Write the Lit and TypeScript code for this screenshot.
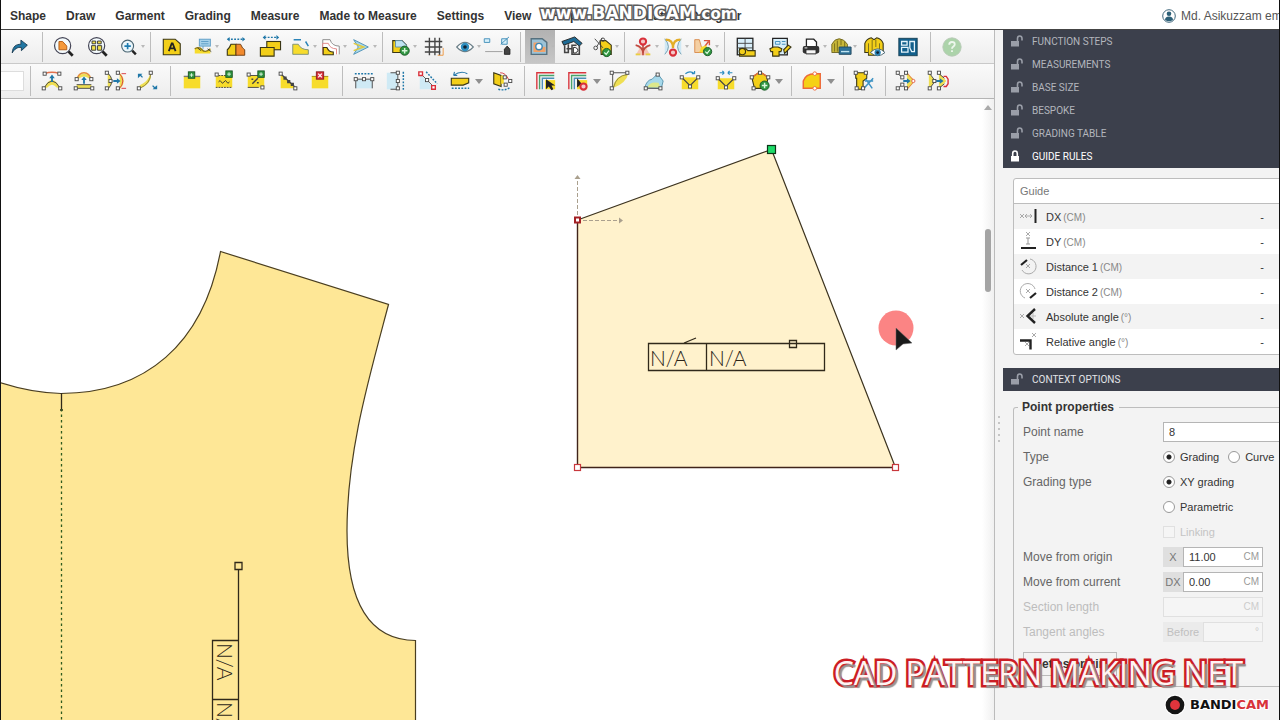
import { LitElement, html, svg, css, TemplateResult } from "lit";
import { customElement } from "lit/decorators.js";
import { classMap } from "lit/directives/class-map.js";

const node = (x: number, y: number) => svg`<rect class="n" x=${x - 1.7} y=${y - 1.7} width="3.4" height="3.4"/>`;
const nodes = (...p: number[][]) => p.map(([x, y]) => node(x, y));
const plus = (x: number, y: number) => svg`<circle cx=${x} cy=${y} r="5" fill="#2f9540" stroke="#1c5a28"/><path d="M${x - 3} ${y}h6M${x} ${y - 3}v6" stroke="#d9f5dc" stroke-width="1.6"/>`;
const check = (x: number, y: number) => svg`<circle cx=${x} cy=${y} r="4.5" fill="#2f9540" stroke="#1c5a28"/><path d="M${x - 2.5} ${y}l2 2l3-4" fill="none" stroke="#e6ffe8" stroke-width="1.3"/>`;
const stop = (x: number, y: number) => svg`<circle cx=${x} cy=${y} r="3.4" fill="#f4c9c9" stroke="#d9303a" stroke-width="2.2"/>`;

const icons: Record<string, TemplateResult> = {
  Redo: svg`<path d="M3.500 18.500C4 11 8 9 13 9V4.500L20 10L13.500 16V12.500C9 12 6 14 3.500 18.500Z" fill="#2177a3" stroke="#1d3c52"/>`,
  "Zoom piece": svg`<circle cx="10.500" cy="10.500" r="8.800" fill="#f4fbfd" stroke="#445" stroke-width="1.300"/><path d="M17 17l4.500 4.500" stroke="#222" stroke-width="3"/><path d="M6.500 6h4l4.500 5v4H6.500Z" fill="#f59a3c" stroke="#b35a10"/>`,
  "Zoom all": svg`<circle cx="10.500" cy="10.500" r="8.800" fill="#f4fbfd" stroke="#445" stroke-width="1.300"/><path d="M17 17l4.500 4.500" stroke="#222" stroke-width="3"/><path d="M5.500 5.500h4v3h-4zM11.500 5.500h4v3h-4zM5 10.500h4.500v5h-4.500zM11.500 10.500h4.500v5h-4.500z" fill="#f0e04a" stroke="#333"/>`,
  "Zoom in": svg`<circle cx="10.500" cy="11" r="6.500" fill="#eaf6fb" stroke="#4a6572" stroke-width="1.200"/><path d="M15.500 16l4 4" stroke="#222" stroke-width="2.600"/><path d="M10.500 7.500v7M7 11h7" stroke="#1d7bb0" stroke-width="1.800"/>`,
  Annotation: svg`<path class="y" d="M2.500 3.500h13l5.500 5v12h-18.500Z"/><path d="M8.500 16.500l3.200-8.500h1l3.200 8.500M9.700 13.500h5" fill="none" stroke="#222" stroke-width="1.900"/>`,
  "Piece note": svg`<path class="ys" d="M3 14q5-3 8 1t9-1v5H3Z"/><path d="M3 14q5-3 8 1t9-1" fill="none" stroke="#8f7a14" stroke-width="1.500"/><rect x="8" y="3.500" width="12" height="7.500" fill="#a8d2ea" stroke="#5b9cc5"/><path d="M10 6h8M10 8.500h8M12 11v3" stroke="#5b9cc5"/><path d="M6 13l4 3M17 14l4 3" stroke="#333"/>`,
  "Mirror piece": svg`<path d="M3 3.500h18" class="db"/><path d="M5 1l-3 2.500 3 2.500zM19 1l3 2.500-3 2.500z" class="b"/><path class="y" d="M2.500 21v-6q2-1 4-6h5.500v12Z"/><path d="M12 9h5q2 5 4.500 6v6H12Z" fill="#f28a2e" stroke="#6b3a10"/>`,
  "Move piece": svg`<path d="M6 1.500h14" class="db"/><path d="M7-1l-3 2.500 3 2.500zM19-1l3 2.500-3 2.500z" class="b"/><rect class="y" x="8.500" y="6" width="15" height="9"/><path class="y" d="M1.500 12.500h15v9.500h-15z"/>`,
  "Extend seam": svg`<path d="M4 4h8M17 6l3 5" class="bl"/><path class="ys" d="M3 9h6q3 6 11 6v5H3Z"/><path d="M3 9h6q3 6 11 6v5H3Z" class="o"/>`,
  "Offset piece": svg`<path d="M3 20V4h8q2 7 10 7v9" fill="#fff" stroke="#888"/><path d="M3 20V8h6q2 6 9 6v6" fill="#fff" stroke="#e08080"/><path class="y" d="M3.500 20.500v-8h4q2 5 7 5v3Z"/>`,
  Dart: svg`<path d="M4 4L20 12L4 20L9 12Z" fill="#a8d8ea" stroke="#4a8fb5"/><path d="M4 8l11 4L4 16" fill="none" stroke="#e2c938" stroke-width="1.500"/>`,
  "New piece": svg`<path class="y" d="M3 5h10l5 5v8H3Z"/><path d="M6 5h7l5 5v2H6z" fill="#bfe3f0" stroke="#5d8ea5"/>${plus(16, 16)}`,
  Grid: svg`<path class="k" d="M7 2v19M13 2v19M18 2v19M2 6h19M2 12h19M2 17.500h17" stroke-width="1.500"/><path d="M16 21h6v-8" fill="none" stroke="#ee9640"/>`,
  View: svg`<path d="M3 12q9-10 18 0q-9 10-18 0Z" fill="#fff" stroke="#6b7f88" stroke-width="1.300"/><circle cx="12" cy="12" r="4.600" fill="#2e8fc0"/><circle cx="12" cy="12" r="2" fill="#123"/>`,
  Slider: svg`<path d="M-3 3h6v4h-6zM16 3h6v6h-6z" fill="#d7f0fb" stroke="#3f8db8"/><path d="M-2 17h19" stroke="#999"/><path d="M19 20v-5.500l3-3.500 3 3.500v5.500z" fill="#444" stroke="#222"/><path d="M15 9l9-8" stroke="#3f8db8"/>`,
  "Show piece": svg`<path d="M3.500 3h12l5 4v13h-17Z" fill="#9cc2d6" stroke="#55707e" stroke-width="1.500"/><path d="M6 17.500V7h7q1 5 6 5v5.500Z" fill="#f2a268"/><circle cx="12" cy="11.500" r="3.500" fill="#fff" stroke="#3c88b4" stroke-width="1.500"/>`,
  Carriage: svg`<path d="M1 6L15 1l8 7-3 3-6-5-11 4Z" fill="#1e6b95" stroke="#222"/><path class="k" d="M4 10v8h4v-9M6 14h6M20 11v9h-8v-10h5" stroke-width="1.700"/><path d="M13.500 12.500v6h2q3-1 3-3t-3-3z" fill="#fff" stroke="#222"/>`,
  Cut: svg`<path class="y" d="M9 5h6l6 5v10H10Z"/><path class="k" d="M3 3l9 10M11 2l-6 10"/><circle cx="4" cy="13" r="2" class="k"/><circle cx="12" cy="4" r="1.800" class="k"/>${check(16, 18)}`,
  Fitting: svg`<path d="M4 21l4-7-4-4 8 4 8-4-4 4 4 7z" fill="#f4c6b8"/><path d="M12 9v12M4 10q8 2 8 9q0-7 8-9" fill="none" stroke="#c04a40" stroke-width="1.800"/><path d="M4 20h5M15 20h5" stroke="#e8d040" stroke-width="2"/>${stop(12, 6)}`,
  Unpick: svg`<path d="M3 3q8 9 0 17M21 3q-8 9 0 17" fill="#cfe8f4" stroke="#6b9aae"/><path d="M4 4q8 0 8 9q0-9 8-9" fill="none" stroke="#e3ae28" stroke-width="2.500"/>${stop(12, 18)}`,
  "Grade check": svg`<path d="M3 4h5l4 14H3z" fill="#f4cfa3" stroke="#d98a4a"/><path d="M9 18L18 6M13 5h6v5" fill="none" stroke="#d95540" stroke-width="1.500"/><path class="ys" d="M10 12l6-2v8H8z"/>${check(17, 17)}`,
  "Size table": svg`<rect x="2.500" y="2.500" width="17" height="18" fill="#d8effa" stroke="#222" stroke-width="1.400"/><path class="k" d="M2.500 8h17M2.500 13h17M11 2.500v18"/><path class="y" d="M5 14h7l2 2h8v6H5z"/><circle class="y" cx="8" cy="17" r="3.500"/>`,
  "Garment sheet": svg`<path d="M4 2.500h16v18h-16z" fill="#d8effa" stroke="#222" stroke-width="1.300"/><path d="M7 6h5v3H7zM14 6h4M14 9h4" stroke="#3d8dbd" fill="none"/><path class="y" d="M1 14l4-2h5l4 2-1 3h-2v5H4v-5H2zM16 15l5-5 3 2-7 7z"/>`,
  Print: svg`<path d="M7 11V3.500h8l3 3v5" fill="#fff" stroke="#222" stroke-width="1.400"/><rect x="3" y="11" width="18" height="8" rx="2" fill="#333"/><path d="M6.500 15h11v4.500h-11z" fill="#f6f6f6" stroke="#222"/><path d="M5 13h3" stroke="#fff"/>`,
  "Garment print": svg`<path d="M2 17V9q3-6 8-6t9 6v9H2z" fill="#c9b83a" stroke="#6d6420"/><path d="M12 4v6M8 5v12M16 6v6M5 8v9" stroke="#776b18"/><path d="M10 12h13v8H10z" fill="#2f7299" stroke="#22495e"/><path d="M12 17h9" stroke="#bfe3f0" stroke-width="1.500"/>`,
  "Garment view": svg`<path class="y" d="M2 8q2-5 7-6l3 2 3-2q5 1 7 6v10h-4v3H6v-3H2Z"/><path d="M6 8v12M10 4v14M14 4v8M18 8v7" stroke="#776b18"/><path d="M8 18q8-8 16 0q-8 7-16 0Z" fill="#fff" stroke="#42606e"/><circle cx="16" cy="18" r="3.400" fill="#2a84b6"/><circle cx="16" cy="18" r="1.500" fill="#123"/>`,
  Marker: svg`<rect x="2" y="2.500" width="20" height="19" fill="#13608c" stroke="#174055"/><path d="M5 6h6v4H5zM5 12.500h7v5H5zM14 6h5v11h-3l-2-4z" fill="none" stroke="#e7f5fc" stroke-width="1.400"/>`,
  Help: svg`<circle cx="12" cy="12" r="10" fill="#acd3aa" stroke="#b8c9b7"/><path d="M9 9.500q0-3 3-3t3 2.500q0 1.500-1.500 2.500t-1.500 2.500M12 15.500v2" fill="none" stroke="#edf7ed" stroke-width="2"/>`,

  "Curve up": svg`<path class="yl" d="M3 20q9-18 18 0l-4-1q-5-6-10 0z"/><path d="M4 4q8-3 16 0" fill="none" stroke="#e2704c" stroke-width="1.600"/><path class="k" d="M3 20q9-16 18 0"/><path class="bf" d="M12 5l-3 4h2v4h2v-4h2z"/>${nodes([4, 4], [20, 4], [3, 20], [21, 20])}`,
  "Curve down": svg`<path class="yl" d="M4 16h16v4H4zM4 11q2-7 8-7t8 7l-3-2q-5-4-10 0z"/><path d="M4 11q2-8 8-8t8 8" fill="none" stroke="#e58c3a" stroke-width="1.600"/><path class="k" d="M4 20h16M4 16h16"/><path class="bf" d="M12 7l-3 4h2v4h2v-4h2z"/>${nodes([4, 10], [20, 10], [3, 20], [21, 20])}`,
  "Curve right": svg`<path class="yl" d="M3 3q9 9 0 18zM16 3q9 9 0 18z"/><path class="k" d="M3 3q9 9 0 18"/><path d="M15 3q9 9 0 18M18 4h5M18 20h5" fill="none" stroke="#d9363e"/><path class="bf" d="M9 11h4v-2l4 3-4 3v-2H9z"/>${nodes([2, 3], [2, 20], [14, 3], [14, 20], [6, 12])}`,
  "Curve stretch": svg`<path class="yl" d="M15 3q2 12-12 17q-2-3 3-5q6-3 9-12"/><path d="M15 3q0 12-12 17" fill="none" stroke="#8a8030"/><path class="bf" d="M1 4h5l-1.500 1.500 2 2-1 1-2-2L1 9zM22 21h-5l1.500-1.500-2-2 1-1 2 2 2.500-2z"/>${nodes([15, 3], [2, 20])}`,
  "Add point": svg`<path class="ys" d="M3 7h18v13H3z"/><path d="M3 7h18" stroke="#777" stroke-width="1.500"/><rect x="8" y="2" width="7" height="7" fill="#2f9540" stroke="#175522"/><path d="M9.500 5.500h4M11.500 3.500v4" stroke="#dff5e2"/>`,
  "Add named": svg`<path class="ys" d="M3 6h18v13H3z"/><path class="k" d="M3 6h18M3 19h18" stroke-dasharray="2 1"/><path d="M6 13q2-3 3 0t3 0t3 0t3 0" fill="none" stroke="#333"/><rect x="14" y="1" width="7" height="7" fill="#2f9540" stroke="#175522"/><path d="M15.500 4.500h4M17.500 2.500v4" stroke="#dff5e2"/>${nodes([4, 5])}`,
  "Add ratio": svg`<path class="ys" d="M3 6h18v13H3z"/><path class="k" d="M3 6h18M3 19h12"/><path class="k" d="M8 15l6-6M7 10h2M13 14h2" stroke-width="1.600"/><rect x="14" y="1" width="7" height="7" fill="#2f9540" stroke="#175522"/><path d="M15.500 4.500h4M17.500 2.500v4" stroke="#dff5e2"/>${nodes([4, 5], [19, 19])}`,
  "Divide line": svg`<path class="ys" d="M4 4l17 16H4Z"/><path class="k" d="M4 4l17 16" stroke-width="1.400"/><path d="M7 7h3.500v3.500H7zM11 11h3.500v3.500H11zM15 14h3.500v3.500H15z" fill="#444"/>${nodes([4, 4], [20, 20])}`,
  "Delete point": svg`<path class="ys" d="M3 7h18v13H3z"/><path d="M3 7h18" stroke="#a08a10"/><rect x="8" y="2" width="8" height="8" fill="#d9303a" stroke="#8a1c22"/><path d="M10 4l4 4M14 4l-4 4" stroke="#fff" stroke-width="1.400"/>`,
  "Align across": svg`<path class="ls" d="M3 10h18v10H3z"/><path class="db" d="M2 4h20"/><path class="k" d="M3 10h18M3 12v8M21 12v8"/>${nodes([3, 10], [12, 10], [21, 10])}`,
  "Align down": svg`<path class="ls" d="M2 3h12v18H2z"/><path class="db" d="M20 2v20"/><path class="k" d="M6 3h8v18H6"/>${nodes([14, 3], [14, 12], [14, 20])}`,
  "Align slope": svg`<path class="ls" d="M3 4l17 17H3Z"/><path class="db" d="M10 2l12 13"/><path d="M4 4l15 15" stroke="#555"/><path d="M2 2h4v4H2zM16 17h4v4h-4z" fill="#fff" stroke="#d9303a" stroke-width="1.500"/>${nodes([11, 11])}`,
  "Rotate piece": svg`<path class="db" d="M3 20h19"/><path d="M5 6q8-6 15-2M5 6l1-4M5 6l4 0" fill="none" stroke="#2b7bab" stroke-width="1.200"/><path class="y" d="M2.500 9h19v5l-6 2.500h-13z"/>`,
  "Fold piece": svg`<path class="y" d="M3 3l8 3v12l-8-3z"/><path class="ys" d="M11 6h3v9h-3z"/><path d="M10 3q6 0 9 7" fill="none" stroke="#d9363e"/><path class="db" d="M8 21q7 2 13-2"/>${nodes([15, 8], [21, 12], [16, 16])}`,
  "Pick seam": svg`<path d="M2 21V3h19" fill="none" stroke="#d9363e" stroke-width="1.500"/><path d="M5 21V6h16" fill="none" stroke="#4aa36a" stroke-width="1.500"/><path d="M8 21V9h13" fill="none" stroke="#4c8fb8" stroke-width="1.500"/><path class="ys" d="M11 11h11v10H11z"/><path d="M12 10v11l3-3 3 4 2-1-2-4h4z" fill="#222"/>`,
  "Delete seam": svg`<path d="M2 21V3h19" fill="none" stroke="#d9363e" stroke-width="1.500"/><path d="M5 21V6h16" fill="none" stroke="#4aa36a" stroke-width="1.500"/><path d="M8 21V9h13" fill="none" stroke="#4c8fb8" stroke-width="1.500"/><path class="ys" d="M11 11h11v10H11z"/><path d="M11 9v10l5-4z" fill="#222"/>${stop(18, 18)}`,
  "Curve segment": svg`<path class="yl" d="M4 20Q6 6 21 4Q19 14 4 20Z"/><path class="k" d="M4 3h17M4 3v18"/><path d="M5 19Q8 6 20 5" fill="none" stroke="#8c8740"/>${nodes([3, 3], [20, 3], [3, 20])}`,
  "Polygon piece": svg`<path d="M2 19q2-8 8-9l6-6 6 8-2 8Z" fill="#a6d8ea" stroke="#5593ad"/><path d="M5 19q2-7 12-5l2 5z" fill="#dce88a"/><path class="k" d="M3 20h17"/>${nodes([3, 20], [19, 20], [16, 5])}`,
  "Rotate notch": svg`<path class="ys" d="M3 8h18v13H3z"/><path class="k" d="M3 8l9 9 9-9" stroke-width="1.300"/><path d="M7 4q5-4 10 0M17 4l-3 0M17 4l0-3" fill="none" stroke="#2b8cc0" stroke-width="1.300"/>${nodes([3, 8], [21, 8], [12, 18])}`,
  "Slide notch": svg`<path class="ys" d="M3 9h18v12H3z"/><path class="k" d="M3 9l9 9 9-9" stroke-width="1.300"/><path d="M5 3h5M14 3h5M10 3l-2-2M10 3l-2 2M14 3l2-2M14 3l2 2" fill="none" stroke="#2b8cc0" stroke-width="1.300"/>${nodes([3, 9], [21, 9], [12, 19])}`,
  "Add pocket": svg`<path class="y" d="M3 8l9-6 9 6-3 12H6Z"/><path d="M3 8l9-6 9 6" fill="none" stroke="#e2703a" stroke-width="1.500"/>${nodes([3, 8], [12, 3], [21, 8], [5, 20])}${plus(17, 17)}`,
  "Facing piece": svg`<path d="M2.500 20V12Q5 4 15 4h6v16Z" fill="#f5d116" stroke="#ed6a3a" stroke-width="1.600"/><circle cx="15" cy="4" r="2" fill="#fff" stroke="#ed6a3a"/><circle cx="15" cy="20" r="2" fill="#fff" stroke="#ed6a3a"/>`,
  "Split piece": svg`<path class="y" d="M3 3h12v6l-4 3v9H4V9H3Z"/><path d="M13 12h9M12 20l10-11M14 10l7 10" fill="none" stroke="#3c92c4" stroke-width="1.600"/>${nodes([3, 3], [14, 3], [4, 20], [11, 20])}`,
  "Merge point": svg`<path class="yl" d="M12 3l9 9-9 9q3-9 0-18"/><path class="k" d="M3 4l6 5M3 20l6-5"/><path d="M13 3q4 5 8 9q-4 5-8 9" fill="none" stroke="#e58c3a" stroke-width="1.300"/><path class="bf" d="M9 11h4v-2l4 3-4 3v-2H9z"/>${nodes([3, 3], [8, 8], [3, 20], [8, 16], [12, 3], [12, 20])}<circle cx="20" cy="12" r="1.800" fill="#fff" stroke="#e2604a"/>`,
  "Merge curve": svg`<path class="yl" d="M2 3l7 9-7 9zM13 3l8 9-8 9z"/><path class="k" d="M3 4l6 8-6 8M13 4l6 5M13 20l6-5"/><path class="bf" d="M10 11h4v-2l4 3-4 3v-2h-4z"/><path d="M18 7h3l2 3v5l-2 3h-3" fill="none" stroke="#d9303a" stroke-width="1.500"/>${nodes([3, 3], [3, 20], [8, 12], [13, 3], [13, 20])}`,
};

type Tool = { name?: string; kind?: "drop" | "wide" | "sep" | "sepwide" };
const t = (names: string): Tool[] =>
  names.split("|").map((s) => {
    if (s === "-") return { kind: "sep" };
    if (s === "=") return { kind: "sepwide" };
    if (s.endsWith(">")) return { name: s.slice(0, -1), kind: "drop" };
    if (s.endsWith("~")) return { name: s.slice(0, -1), kind: "wide" };
    return { name: s };
  });

const rowOne = t("Redo|-|Zoom piece|Zoom all|Zoom in>|-|Annotation|Piece note>|Mirror piece|Move piece|Extend seam>|Offset piece>|Dart>|-|New piece>|Grid|View>|Slider|-|Show piece>|Carriage|Cut>|-|Fitting>|Unpick>|Grade check>|-|Size table|Garment sheet|Print>|Garment print>|Garment view|Marker|-|Help");
const rowTwo = t("=|Curve up|Curve down|Curve right|Curve stretch|=|Add point|Add named|Add ratio|Divide line|Delete point|=|Align across|Align down|Align slope|Rotate piece>|Fold piece|=|Pick seam|Delete seam>|Curve segment|Polygon piece~|Rotate notch~|Slide notch~|Add pocket>|-|Facing piece>|-|Split piece|-|Merge point|Merge curve");

@customElement("pattern-toolbar")
export class PatternToolbar extends LitElement {
  static styles = css`
    :host { display: block; }
    .row { display: flex; align-items: center; height: 33px; overflow: hidden; background: linear-gradient(#fafafa, #ededed); border-bottom: 1px solid #c9c9c9; }
    .first { padding-left: 2px; }
    .second { height: 34px; border-color: #b4b4b4; }
    button { display: flex; align-items: center; justify-content: center; flex: none; height: 33px; padding: 0; border: 0; background: none; width: 34px; }
    .first .drop { width: 30px; justify-content: flex-end; gap: 1px; }
    .second button { width: 32px; }
    .second .drop { width: 42px; justify-content: flex-start; padding-left: 5px; gap: 4px; }
    .second .wide { width: 36px; }
    .first .on { background: linear-gradient(#b2b2b2, #c6c6c6); }
    .sep { flex: none; width: 10px; height: 30px; display: flex; justify-content: center; }
    .sepwide { width: 12px; }
    .sep::before { content: ""; width: 1px; background: #bdbdbd; }
    .arrow { border: 2px solid transparent; border-top: 3px solid #b9b9b9; border-bottom: 0; flex: none; }
    .second .arrow { border: 4px solid transparent; border-top: 5px solid #8f8f8f; border-bottom: 0; }
    select { appearance: none; width: 23px; height: 20px; border: 1px solid #ddd; border-left: 0; background: #fff; padding: 0; flex: none; }
    svg { width: 22px; height: 22px; overflow: visible; flex: none; }
    .y { fill: #f3cf19; stroke: #3a3616; stroke-width: 1.2; }
    .ys { fill: #f7dc2c; }
    .yl { fill: #efdf52; }
    .ls { fill: #cfeaf5; }
    .o { fill: none; stroke: #7b8f74; }
    .k { fill: none; stroke: #444; }
    .n { fill: #fff; stroke: #4a4a4a; }
    .b, .bf { fill: #1f77a8; }
    .bl { fill: none; stroke: #2b84b8; stroke-width: 1.6; }
    .db { fill: none; stroke: #1f77a8; stroke-width: 1.6; stroke-dasharray: 2 1.5; }
  `;
  private tool(i: Tool) {
    if (!i.name) return html`<span class=${classMap({ sep: true, sepwide: i.kind === "sepwide" })}></span>`;
    const drop = i.kind === "drop";
    return html`<button aria-label=${i.name} class=${classMap({ drop, wide: i.kind === "wide", on: i.name === "Show piece" })}>
      <svg viewBox="0 0 24 24">${icons[i.name]}</svg>${drop ? html`<span class="arrow"></span>` : ""}</button>`;
  }
  render() {
    return html`<div class="row first">${rowOne.map((i) => this.tool(i))}</div>
      <div class="row second"><select aria-label="Line style"><option></option></select>${rowTwo.map((i) => this.tool(i))}</div>`;
  }
}

@customElement("pattern-canvas")
export class PatternCanvas extends LitElement {
  static styles = css`
    :host { display: flex; background: #fff; min-height: 0; }
    .draw { flex: 1; width: 0; height: 100%; display: block; }
    .bar { width: 12px; background: linear-gradient(90deg, #fff, #f0f0f0); display: flex; flex-direction: column; align-items: center; padding-top: 6px; }
    .up { border: 4px solid transparent; border-bottom: 5px solid #aaa; border-top: 0; }
    .thumb { width: 6px; height: 63px; border-radius: 3px; background: #a4a4a4; margin-top: 119px; }
    .line { fill: none; stroke: #3c331f; stroke-width: 1.2; }
    .mark { fill: none; stroke: #30291a; stroke-width: 1.3; }
    .label { font: 300 21px Lato, sans-serif; fill: #2a2418; }
    .axis { fill: none; stroke: #aaa08e; stroke-dasharray: 4 2; }
    .corner { fill: #fff; stroke: #c8383c; stroke-width: 1.2; }
  `;
  render() {
    return html`<svg class="draw"><g transform="translate(-1 -99)">
        <path d="M-5 381Q30 393 61 393.500C145 393 203 345 220.500 251.500L388.500 304.500C369 378 347 452 347 531C347 600 367 640 415.500 640.500V730H-5Z" fill="#fee796" stroke="#4a3e20" stroke-width="1.200"/>
        <path class="mark" d="M61.500 393v17M60 410h3"/>
        <path d="M61.500 409V720" stroke="#2e5b1e" stroke-dasharray="2.500 3" stroke-width="1.300"/>
        <path class="mark" d="M238.500 570V720M212.500 720V640.500H238.500M212.500 699.500h26M235 562.500h7v7h-7z"/>
        <text class="label" transform="translate(217 643) rotate(90)">N/A</text>
        <text class="label" transform="translate(217 702) rotate(90)">N/A</text>
        <path d="M577.500 220L771.500 149.500L895.500 467.500H577.500Z" fill="#fff2cc"/>
        <path class="line" d="M577.500 220L771.500 149.500L895.500 467.500"/>
        <path d="M577.500 220V467.500H895.500" fill="none" stroke="#40241a" stroke-width="1.400"/>
        <path class="axis" d="M577.500 215V180M583 220.500H618"/>
        <path d="M574.500 179l3-4 3 4zM619 217.500l4 3-4 3z" fill="#aaa08e"/>
        <rect x="575" y="217.500" width="5" height="5" fill="#fff" stroke="#a32024" stroke-width="2"/>
        <rect class="corner" x="574.500" y="464.500" width="6" height="6"/><rect class="corner" x="892.500" y="464.500" width="6" height="6"/>
        <rect x="767.500" y="145.500" width="8" height="8" fill="#1edb69" stroke="#0d3518" stroke-width="1.200"/>
        <path class="mark" d="M648.500 343.500h176v27h-176zM706.500 343.500v27M684 343l12-5M789.500 340.500h7v7h-7z"/>
        <text class="label" x="650" y="366">N/A</text><text class="label" x="709" y="366">N/A</text>
        <circle cx="896" cy="328" r="17.500" fill="#fb8484"/>
        <path d="M896 328l16 15-9 1-7 6Z" fill="#1a1a1a" stroke="#666" stroke-width=".5"/>
      </g></svg>
      <div class="bar"><span class="up"></span><span class="thumb"></span></div>`;
  }
}

const lock = (open: boolean) => svg`<path d="M1 6h8v5.500h-8z" fill="currentColor"/><path d=${open ? "M7.500 6V3.500q0-2.500 2.200-2.500t2.300 2.500v2" : "M2.700 6V3.500q0-2.500 2.300-2.500t2.300 2.500V6"} fill="none" stroke="currentColor" stroke-width="1.600"/>`;
const cross = (x: number, y: number) => svg`<path d="M${x - 2} ${y - 2}l4 4M${x + 2} ${y - 2}l-4 4" stroke="#aaa"/>`;
const guides = [
  { name: "DX", unit: "(CM)", art: svg`${cross(2, 8)}<path d="M5 8h7M7 6l-2 2 2 2M10 6l2 2-2 2" fill="none" stroke="#999" stroke-width=".8"/><path d="M15.500 1v14" stroke="#222" stroke-width="2"/>` },
  { name: "DY", unit: "(CM)", art: svg`${cross(8, 1)}<path d="M8 5v6M6 5h4M6 11h4" stroke="#999"/><path d="M1 15h15" stroke="#222" stroke-width="2"/>` },
  { name: "Distance 1", unit: "(CM)", art: svg`<path d="M10 1a7.500 7.500 0 1 1-8 11" fill="none" stroke="#aaa"/>${cross(8, 8)}<path d="M1 7l6-5" stroke="#222" stroke-width="2.200"/>` },
  { name: "Distance 2", unit: "(CM)", art: svg`<path d="M5 15a7.500 7.500 0 1 1 10-9" fill="none" stroke="#aaa"/>${cross(8, 8)}<path d="M10 15l6-5" stroke="#222" stroke-width="2.200"/>` },
  { name: "Absolute angle", unit: "(°)", art: svg`${cross(2, 8)}<path d="M8 8h8M13 5v6" stroke="#bbb"/><path d="M15 1L7.500 8l7.500 7" fill="none" stroke="#222" stroke-width="2.400"/>` },
  { name: "Relative angle", unit: "(°)", art: svg`${cross(14, 2)}${cross(7, 11)}<path d="M0 7.500h10.500v9" fill="none" stroke="#222" stroke-width="2.400"/>` },
];

@customElement("side-panel")
export class SidePanel extends LitElement {
  static styles = css`
    :host { display: flex; flex-direction: column; min-width: 0; overflow: hidden; background: #f3f3f3; color: #333; font: 12px "Liberation Sans", Arial, sans-serif; }
    .body { flex: 1; display: flex; flex-direction: column; min-height: 0; margin-bottom: 33px; border-bottom: 1px solid #bbb; }
    .head { display: flex; align-items: center; gap: 9px; width: 100%; height: 23px; flex: none; padding: 0 0 0 7px; border: 0; background: #3c404c; color: #b3b6bd; font: 10px Roboto, sans-serif; text-align: left; }
    .head svg { width: 13px; height: 13px; color: #9a9ea8; }
    .lit, .lit svg { color: #fff; }
    .lite { color: #e2e4e8; }
    .card { margin: 10px -4px 13px 10px; border: 1px solid #bdbdbd; border-radius: 3px; background: #fff; }
    table { width: 100%; border-collapse: collapse; }
    th { height: 24px; padding: 0 0 0 6px; text-align: left; font-weight: 400; font-size: 11px; color: #777; border-bottom: 1px solid #bdbdbd; }
    td { height: 25px; padding: 0; font-size: 11px; }
    tr:nth-child(odd) td { background: #f3f3f3; }
    td:first-child { width: 32px; padding-left: 6px; box-sizing: border-box; }
    td:last-child { width: 40px; padding-right: 18px; text-align: right; }
    td svg { width: 17px; height: 17px; display: block; overflow: visible; }
    .unit { color: #888; font-size: 10px; padding-left: 2px; }
    fieldset { flex: 1; min-width: 0; margin: 9px -4px 0 10px; padding: 5px 0 0 9px; border: 1px solid #bdbdbd; border-bottom: 0; border-radius: 3px; display: block; }
    legend { padding: 0 5px 0 4px; margin-left: -5px; font-weight: 700; line-height: 14px; }
    .row { display: grid; grid-template-columns: 140px 1fr; align-items: center; height: 25px; color: #666; }
    .off { color: #bdbdbd; }
    .set { display: flex; align-items: center; gap: 9px; white-space: nowrap; }
    .pick { display: flex; align-items: center; gap: 5px; font-size: 11px; color: #333; }
    .off .pick { color: #c4c4c4; }
    input { font: 11px "Liberation Sans", Arial, sans-serif; color: #333; }
    .text { box-sizing: border-box; height: 20px; width: 100%; border: 1px solid #b5b5b5; background: #fff; padding: 0 5px; border-radius: 0; }
    .pick input { appearance: none; width: 12px; height: 12px; margin: 0; border: 1px solid #999; border-radius: 50%; background: #fff; }
    .pick input:checked { background: radial-gradient(circle, #222 0 2px, #fff 3px); }
    .pick input[type="checkbox"] { border-radius: 0; border-color: #e0e0e0; background: #f5f5f5; }
    .group { display: flex; width: 100px; height: 20px; }
    .tag { flex: none; width: 20px; display: flex; align-items: center; justify-content: center; background: #dfdfdf; color: #777; font-size: 11px; }
    .long { width: 40px; background: #ebebeb; color: #c0c0c0; }
    .box { flex: 1; min-width: 0; display: flex; align-items: center; box-sizing: border-box; border: 1px solid #b5b5b5; background: #fff; padding-right: 3px; }
    .box input { flex: 1; min-width: 0; width: 0; border: 0; background: none; padding: 0 0 0 5px; }
    .box span { color: #999; font-size: 10px; }
    .off .box { background: #f5f5f5; border-color: #e0e0e0; }
    .off .box span { color: #ccc; }
    .reset { margin-top: 8px; height: 24px; width: 94px; padding: 0; border: 1px solid #bbb; background: #f3f3f3; font: bold 12px "Liberation Sans", Arial, sans-serif; color: #333; }
  `;
  private head(name: string, cls = "") {
    return html`<button class="head ${cls}"><svg viewBox="0 0 13 13">${lock(cls !== "lit")}</svg>${name}</button>`;
  }
  private measure(label: string, id: string, tag: string, value: string, unit: string, off = false) {
    return html`<div class=${classMap({ row: true, off })}><label for=${id}>${label}</label>
      <div class="group">${tag ? html`<span class=${classMap({ tag: true, long: tag.length > 2 })}>${tag}</span>` : ""}
        <div class="box"><input id=${id} .value=${value} ?disabled=${off}><span>${unit}</span></div></div></div>`;
  }
  render() {
    return html`<div class="body">
      <nav>${["FUNCTION STEPS", "MEASUREMENTS", "BASE SIZE", "BESPOKE", "GRADING TABLE"].map((n) => this.head(n))}${this.head("GUIDE RULES", "lit")}</nav>
      <div class="card"><table><thead><tr><th colspan="3">Guide</th></tr></thead><tbody>
        ${guides.map((g) => html`<tr><td><svg viewBox="0 0 17 17">${g.art}</svg></td><td>${g.name}<span class="unit">${g.unit}</span></td><td>-</td></tr>`)}
      </tbody></table></div>
      ${this.head("CONTEXT OPTIONS", "lite")}
      <fieldset><legend>Point properties</legend>
        <div class="row"><label for="pname">Point name</label><input class="text" id="pname" value="8"></div>
        <div class="row"><span>Type</span><div class="set">
          <label class="pick"><input type="radio" name="type" checked>Grading</label>
          <label class="pick"><input type="radio" name="type">Curve</label></div></div>
        <div class="row"><span>Grading type</span><label class="pick"><input type="radio" name="grading" checked>XY grading</label></div>
        <div class="row"><span></span><label class="pick"><input type="radio" name="grading">Parametric</label></div>
        <div class="row off"><span></span><label class="pick"><input type="checkbox" disabled>Linking</label></div>
        ${this.measure("Move from origin", "origin", "X", "11.00", "CM")}
        ${this.measure("Move from current", "current", "DX", "0.00", "CM")}
        ${this.measure("Section length", "section", "", "", "CM", true)}
        ${this.measure("Tangent angles", "tangent", "Before", "", "°", true)}
        <button class="reset">Set as origin</button>
      </fieldset></div>`;
  }
}

@customElement("app-root")
export class AppRoot extends LitElement {
  static styles = css`
    :host { display: flex; flex-direction: column; position: relative; box-sizing: border-box; height: 100vh; overflow: hidden; border: solid #111; border-width: 0 1px; background: #fff; font: 12px "Liberation Sans", Arial, sans-serif; color: #333; }
    header { display: flex; align-items: center; justify-content: space-between; height: 30px; flex: none; padding-top: 2px; box-sizing: border-box; border-bottom: 1px solid #444; }
    .menu { display: flex; gap: 20px; padding-left: 9px; }
    .menu a { color: #333; font-weight: 700; text-decoration: none; white-space: nowrap; }
    .menu .app { padding-left: 48px; }
    .user { display: flex; gap: 5px; align-items: center; width: 117px; overflow: hidden; white-space: nowrap; color: #555; }
    .user svg { width: 14px; height: 14px; flex: none; }
    main { flex: 1; min-height: 0; display: grid; grid-template-columns: 1fr 8px 276px; }
    .work { display: flex; flex-direction: column; min-width: 0; min-height: 0; border-right: 1px solid #bbb; }
    pattern-canvas { flex: 1; }
    .split { background: #f3f3f3; display: flex; flex-direction: column; align-items: center; justify-content: center; gap: 4px; box-sizing: border-box; padding: 138px 0 30px; }
    .split i { width: 2px; height: 2px; background: #c5c5c5; }
    .site { position: absolute; left: 539px; top: 3px; font: bold 17px/20px "DejaVu Sans", sans-serif; color: #fff; -webkit-text-stroke: 3px #5c5c5c; paint-order: stroke fill; white-space: nowrap; }
    .site small { font-size: 15px; }
    .title { position: absolute; right: 36px; bottom: 25px; font: 32px/44px "Open Sans", sans-serif; color: #fff4f2; -webkit-text-stroke: 5px #cc1c24; paint-order: stroke fill; text-shadow: 3px 3px 1px #959595; white-space: nowrap; }
    .brand { position: absolute; right: 10px; bottom: 4px; display: flex; align-items: center; gap: 4px; font: bold 13px/20px "DejaVu Sans", sans-serif; color: #111; -webkit-text-stroke: 2px #fff; paint-order: stroke fill; }
    .brand svg { width: 22px; height: 22px; }
    .brand b { color: #d8323a; }
  `;
  render() {
    return html`
      <header>
        <nav class="menu">${["Shape", "Draw", "Garment", "Grading", "Measure", "Made to Measure", "Settings", "View", "Help"].map((m) => html`<a href="#">${m}</a>`)}<a class="app" href="#">Pattern Designer</a></nav>
        <div class="user"><svg viewBox="0 0 14 14"><circle cx="7" cy="7" r="6.300" fill="#fff" stroke="#41687c"/><circle cx="7" cy="4.800" r="2.300" fill="#2d6078"/><path d="M3 11q0-3.500 4-3.500t4 3.500q-4 2.500-8 0" fill="#2d6078"/></svg>Md. Asikuzzam em</div>
      </header>
      <main>
        <div class="work"><pattern-toolbar></pattern-toolbar><pattern-canvas></pattern-canvas></div>
        <div class="split"><i></i><i></i><i></i><i></i><i></i></div>
        <side-panel></side-panel>
      </main>
      <div class="site">www.BANDICAM<small>.com</small></div>
      <div class="title">CAD PATTERN MAKING NET</div>
      <div class="brand"><svg viewBox="0 0 20 20"><circle cx="10" cy="10" r="9.500" fill="#fff"/><circle cx="10" cy="10" r="8.500" fill="#151515"/><circle cx="10" cy="10" r="4.500" fill="#e0343c"/></svg><span>BANDI<b>CAM</b></span></div>`;
  }
}
